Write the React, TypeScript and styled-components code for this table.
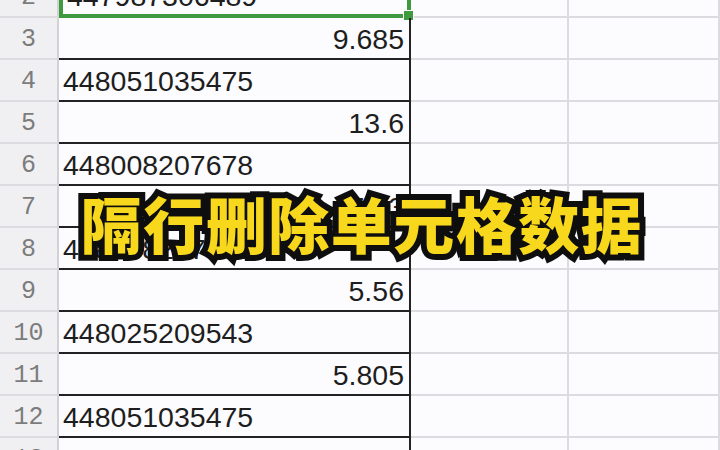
import React from "react";
import styled, { createGlobalStyle } from "styled-components";

const Global = createGlobalStyle`
  html, body { margin: 0; padding: 0; background: #fcfcfe; }
  #root { width: 720px; height: 450px; }
`;

const Page = styled.div`
  position: relative;
  width: 720px;
  height: 450px;
  overflow: hidden;
  background: #fcfcfe;
`;

const Sheet = styled.div`
  display: flex;
  flex-direction: column;
  margin-top: -24px;
`;

const Row = styled.div`
  display: grid;
  grid-template-columns: 59px 352px 158px 1fr;
  height: 42px;
`;

const Header = styled.div`
  box-sizing: border-box;
  background: #f0f0f3;
  border-right: 2px solid #d2d2d6;
  border-bottom: 2px solid #dcdce0;
  display: flex;
  align-items: center;
  justify-content: center;
  padding-top: 2px;
  font-family: "Liberation Mono", "DejaVu Sans Mono", monospace;
  font-size: 25px;
  color: #7c7c7c;
`;

const DataCell = styled.div<{ $align: "left" | "right"; $selected?: boolean }>`
  position: relative;
  box-sizing: border-box;
  border-bottom: 2px solid #222;
  border-right: 2px solid #222;
  display: flex;
  align-items: center;
  justify-content: ${(p) => (p.$align === "right" ? "flex-end" : "flex-start")};
  padding: 3px 5px 0 4px;
  font-family: "Liberation Sans", Arial, sans-serif;
  font-size: 28.5px;
  color: #1e1e1e;
  ${(p) =>
    p.$selected &&
    `
    border-bottom: 4px solid #3f9a3f;
    border-right: 4px solid #3f9a3f;
    border-left: 4px solid #3f9a3f;
    &::after {
      content: "";
      position: absolute;
      right: -7px;
      bottom: -7px;
      width: 9px;
      height: 9px;
      background: #3f9a3f;
      border: 1px solid #fcfcfe;
    }
  `}
`;

const BlankCell = styled.div`
  box-sizing: border-box;
  border-bottom: 2px solid #dcdce0;
  border-right: 2px solid #dcdce0;
`;

const Title = styled.div`
  position: absolute;
  left: 0;
  right: 0;
  top: 192px;
  text-align: center;
  font-family: "Noto Sans CJK SC", "Noto Sans CJK JP", sans-serif;
  font-weight: 900;
  font-size: 61px;
  line-height: 1;
  letter-spacing: 1.5px;
  color: #f8d81c;
  -webkit-text-stroke: 12px #0e0e0e;
  paint-order: stroke fill;
  padding-left: 4px;
`;

type RowData = { n: number; v: string; align: "left" | "right"; selected?: boolean };

const rows: RowData[] = [
  { n: 2, v: "447987306489", align: "left", selected: true },
  { n: 3, v: "9.685", align: "right" },
  { n: 4, v: "448051035475", align: "left" },
  { n: 5, v: "13.6", align: "right" },
  { n: 6, v: "448008207678", align: "left" },
  { n: 7, v: "7.23", align: "right" },
  { n: 8, v: "448008207566", align: "left" },
  { n: 9, v: "5.56", align: "right" },
  { n: 10, v: "448025209543", align: "left" },
  { n: 11, v: "5.805", align: "right" },
  { n: 12, v: "448051035475", align: "left" },
  { n: 13, v: "12.85", align: "right" },
];

export default function App() {
  return (
    <Page>
      <Global />
      <Sheet>
        {rows.map((r) => (
          <Row key={r.n}>
            <Header>{r.n}</Header>
            <DataCell $align={r.align} $selected={r.selected}>
              {r.v}
            </DataCell>
            <BlankCell />
            <BlankCell />
          </Row>
        ))}
      </Sheet>
      <Title>隔行删除单元格数据</Title>
    </Page>
  );
}
